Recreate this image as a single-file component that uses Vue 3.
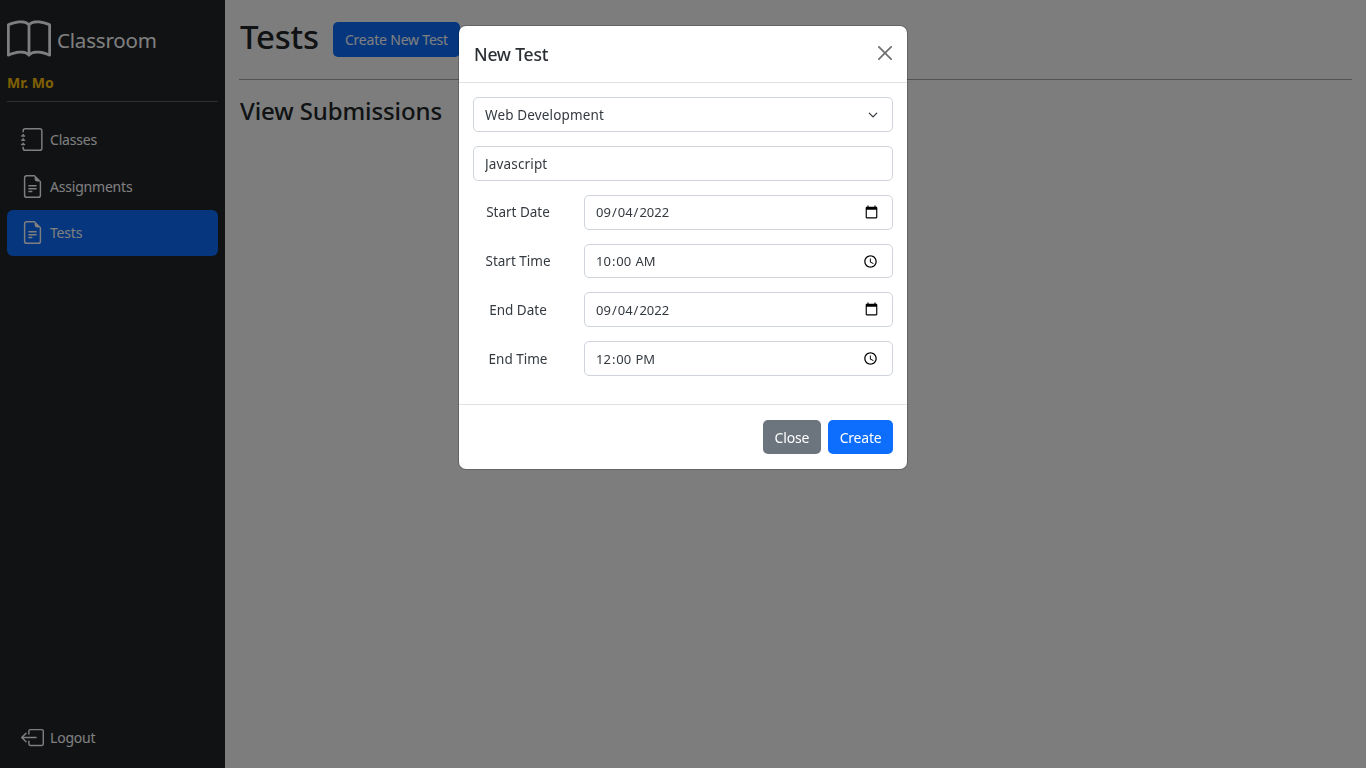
<template>
  <div class="app-layout">
    <aside class="sidebar">
      <div class="brand">
        <svg class="brand-icon" viewBox="0 0 16 16" fill="currentColor">
          <path d="M1 2.828c.885-.37 2.154-.769 3.388-.893 1.33-.134 2.458.063 3.112.752v9.746c-.935-.53-2.12-.603-3.213-.493-1.18.12-2.37.461-3.287.811V2.828zm7.5-.141c.654-.689 1.782-.886 3.112-.752 1.234.124 2.503.523 3.388.893v9.923c-.918-.35-2.107-.692-3.287-.81-1.094-.111-2.278-.039-3.213.492V2.687zM8 1.783C7.015.936 5.587.81 4.287.94c-1.514.153-3.042.672-3.994 1.105A.5.5 0 0 0 0 2.5v11a.5.5 0 0 0 .707.455c.882-.4 2.303-.881 3.68-1.02 1.409-.142 2.59.087 3.223.877a.5.5 0 0 0 .78 0c.633-.79 1.814-1.019 3.222-.877 1.378.139 2.8.62 3.681 1.02A.5.5 0 0 0 16 13.5v-11a.5.5 0 0 0-.293-.455c-.952-.433-2.48-.952-3.994-1.105C10.413.809 8.985.936 8 1.783z" />
        </svg>
        <span class="brand-name">Classroom</span>
      </div>
      <div class="teacher">Mr. Mo</div>
      <hr class="side-rule" />
      <nav class="side-nav">
        <a v-for="item in navItems" :key="item.label" class="nav-link" :class="{ active: item.active }">
          <svg class="nav-icon" viewBox="0 0 16 16" fill="currentColor">
            <path v-for="d in icons[item.icon]" :key="d" :d="d" />
          </svg>
          {{ item.label }}
        </a>
      </nav>
      <a class="nav-link logout">
        <svg class="nav-icon" viewBox="0 0 16 16" fill="currentColor">
          <path v-for="d in icons.logout" :key="d" :d="d" />
        </svg>
        Logout
      </a>
    </aside>

    <main class="content">
      <div class="title-row">
        <h1>Tests</h1>
        <button class="btn btn-primary create-btn">Create New Test</button>
      </div>
      <hr class="main-rule" />
      <h2>View Submissions</h2>
    </main>
  </div>

  <div class="backdrop">
    <div class="modal">
      <header class="modal-header">
        <h5>New Test</h5>
        <svg class="close-icon" viewBox="0 0 16 16" fill="currentColor">
          <path d="M.293.293a1 1 0 0 1 1.414 0L8 6.586 14.293.293a1 1 0 1 1 1.414 1.414L9.414 8l6.293 6.293a1 1 0 0 1-1.414 1.414L8 9.414l-6.293 6.293a1 1 0 0 1-1.414-1.414L6.586 8 .293 1.707a1 1 0 0 1 0-1.414z" />
        </svg>
      </header>
      <div class="modal-body">
        <select class="field text-field select-field">
          <option>Web Development</option>
        </select>
        <input class="field text-field" type="text" value="Javascript" />
        <div v-for="row in timeRows" :key="row.label" class="time-row">
          <label>{{ row.label }}</label>
          <input class="field picker-field" :type="row.type" :value="row.value" />
        </div>
      </div>
      <footer class="modal-footer">
        <button class="btn btn-secondary">Close</button>
        <button class="btn btn-primary">Create</button>
      </footer>
    </div>
  </div>
</template>

<script setup>
const fileIcon = [
  'M5.5 7a.5.5 0 0 0 0 1h5a.5.5 0 0 0 0-1h-5zM5 9.5a.5.5 0 0 1 .5-.5h5a.5.5 0 0 1 0 1h-5a.5.5 0 0 1-.5-.5zm0 2a.5.5 0 0 1 .5-.5h2a.5.5 0 0 1 0 1h-2a.5.5 0 0 1-.5-.5z',
  'M9.5 0H4a2 2 0 0 0-2 2v12a2 2 0 0 0 2 2h8a2 2 0 0 0 2-2V4.5L9.5 0zm0 1v2A1.5 1.5 0 0 0 11 4.5h2V14a1 1 0 0 1-1 1H4a1 1 0 0 1-1-1V2a1 1 0 0 1 1-1h5.5z'
]

const icons = {
  journal: [
    'M3 0h10a2 2 0 0 1 2 2v12a2 2 0 0 1-2 2H3a2 2 0 0 1-2-2v-1h1v1a1 1 0 0 0 1 1h10a1 1 0 0 0 1-1V2a1 1 0 0 0-1-1H3a1 1 0 0 0-1 1v1H1V2a2 2 0 0 1 2-2z',
    'M1 5v-.5a.5.5 0 0 1 1 0V5h.5a.5.5 0 0 1 0 1h-2a.5.5 0 0 1 0-1H1zm0 3v-.5a.5.5 0 0 1 1 0V8h.5a.5.5 0 0 1 0 1h-2a.5.5 0 0 1 0-1H1zm0 3v-.5a.5.5 0 0 1 1 0v.5h.5a.5.5 0 0 1 0 1h-2a.5.5 0 0 1 0-1H1z'
  ],
  file: fileIcon,
  logout: [
    'M6 12.5a.5.5 0 0 0 .5.5h8a.5.5 0 0 0 .5-.5v-9a.5.5 0 0 0-.5-.5h-8a.5.5 0 0 0-.5.5v2a.5.5 0 0 1-1 0v-2A1.5 1.5 0 0 1 6.5 2h8A1.5 1.5 0 0 1 16 3.5v9a1.5 1.5 0 0 1-1.5 1.5h-8A1.5 1.5 0 0 1 5 12.5v-2a.5.5 0 0 1 1 0v2z',
    'M.146 8.354a.5.5 0 0 1 0-.708l3-3a.5.5 0 1 1 .708.708L1.707 7.5H10.5a.5.5 0 0 1 0 1H1.707l2.147 2.146a.5.5 0 0 1-.708.708l-3-3z'
  ]
}

const navItems = [
  { label: 'Classes', icon: 'journal' },
  { label: 'Assignments', icon: 'file' },
  { label: 'Tests', icon: 'file', active: true }
]

const timeRows = [
  { label: 'Start Date', type: 'date', value: '2022-09-04' },
  { label: 'Start Time', type: 'time', value: '10:00' },
  { label: 'End Date', type: 'date', value: '2022-09-04' },
  { label: 'End Time', type: 'time', value: '12:00' }
]
</script>

<style>
html,
body {
  margin: 0;
  background: #f9fbf9;
}
</style>

<style scoped>
* {
  box-sizing: border-box;
}

.app-layout {
  display: flex;
  height: 768px;
  font-family: 'Noto Sans', 'Open Sans', sans-serif;
  color: #212529;
  overflow: hidden;
}

.sidebar {
  width: 225px;
  flex-shrink: 0;
  display: flex;
  flex-direction: column;
  padding: 18px 7px 8px;
  background: #212529;
  color: #fff;
}

.brand {
  display: flex;
  align-items: center;
  gap: 6px;
  height: 44px;
}

.brand-icon {
  width: 44px;
  height: 44px;
}

.brand-name {
  font-size: 20.5px;
  letter-spacing: -0.2px;
}

.teacher {
  margin-top: 10px;
  font-size: 14px;
  line-height: 21px;
  font-weight: 700;
  color: #ffc107;
}

.side-rule {
  margin: 8px 0 14.5px;
  border: 0;
  border-top: 1px solid #5c5f63;
}

.side-nav {
  display: flex;
  flex-direction: column;
  gap: 0.5px;
  flex: 1;
}

.nav-link {
  display: flex;
  align-items: center;
  gap: 6px;
  height: 46px;
  padding-left: 14px;
  border-radius: 6px;
  font-size: 14px;
  letter-spacing: -0.2px;
  color: #fff;
}

.nav-link.active {
  background: #0d6efd;
}

.nav-icon {
  width: 23px;
  height: 23px;
}

.content {
  flex: 1;
  padding: 0 14px;
}

.title-row {
  display: flex;
  align-items: center;
  gap: 14px;
  height: 79px;
  padding-bottom: 4px;
}

h1 {
  margin: 0 0 2px 1px;
  font-size: 33px;
  font-weight: 500;
  letter-spacing: -0.2px;
}

h2 {
  margin: 15px 0 0 1px;
  font-size: 24px;
  line-height: 32px;
  font-weight: 500;
  letter-spacing: -0.1px;
}

.main-rule {
  margin: 0;
  border: 0;
  border-top: 1px solid #a6a6a6;
}

.btn {
  height: 34.75px;
  padding: 0 11px;
  border: 1px solid transparent;
  border-radius: 5px;
  font-family: 'Noto Sans', 'Open Sans', sans-serif;
  font-size: 14px;
  letter-spacing: -0.2px;
  color: #fff;
}

.btn-primary {
  background: #0d6efd;
}

.btn-secondary {
  background: #6c757d;
}

.create-btn {
  margin-top: 4px;
}

.backdrop {
  position: fixed;
  inset: 0;
  display: flex;
  justify-content: center;
  align-items: flex-start;
  padding-top: 26px;
  background: rgba(0, 0, 0, 0.5);
  font-family: 'Noto Sans', 'Open Sans', sans-serif;
  color: #212529;
}

.modal {
  width: 448px;
  background: #fff;
  border-radius: 7px;
  box-shadow: 0 0 0 1px rgba(0, 0, 0, 0.2);
}

.modal-header {
  display: flex;
  align-items: center;
  justify-content: space-between;
  height: 57px;
  padding: 0 15px;
  border-bottom: 1px solid #dee2e6;
}

h5 {
  margin: 0;
  font-size: 17.5px;
  font-weight: 500;
  letter-spacing: -0.2px;
  color: #2b2f33;
}

.close-icon {
  width: 14px;
  height: 14px;
  margin-bottom: 2px;
  color: #6f6f6f;
}

.modal-body {
  display: flex;
  flex-direction: column;
  gap: 14px;
  padding: 14.45px 14px 28.3px;
}

.field {
  display: block;
  width: 100%;
  height: 34.75px;
  padding: 0 11px;
  border: 1px solid #ced4da;
  border-radius: 5px;
  background-color: #fff;
  font-family: 'Noto Sans', 'Open Sans', sans-serif;
  font-size: 13.5px;
  color: #343a40;
}

.text-field {
  padding-top: 1px;
  letter-spacing: 0.15px;
}

.picker-field {
  padding-left: 10px;
  font-size: 13px;
}

.picker-field::-webkit-calendar-picker-indicator {
  width: 15px;
  height: 15px;
  margin-right: 0;
}

.select-field {
  appearance: none;
  background-image: url("data:image/svg+xml,%3csvg xmlns='http://www.w3.org/2000/svg' viewBox='0 0 16 16'%3e%3cpath fill='none' stroke='%23343a40' stroke-linecap='round' stroke-linejoin='round' stroke-width='2' d='m2 5 6 6 6-6'/%3e%3c/svg%3e");
  background-repeat: no-repeat;
  background-position: right 13px center;
  background-size: 12px 10px;
}

.time-row {
  display: grid;
  grid-template-columns: 111px 1fr;
  align-items: center;
}

label {
  padding-right: 21px;
  text-align: center;
  font-size: 13.5px;
  color: #343a40;
}

.modal-footer {
  display: flex;
  justify-content: flex-end;
  gap: 7px;
  padding: 15px 14px;
  border-top: 1px solid #dee2e6;
}

.modal-footer .btn {
  height: 34px;
}

.modal-footer .btn-primary {
  padding: 0 10.5px;
}
</style>
